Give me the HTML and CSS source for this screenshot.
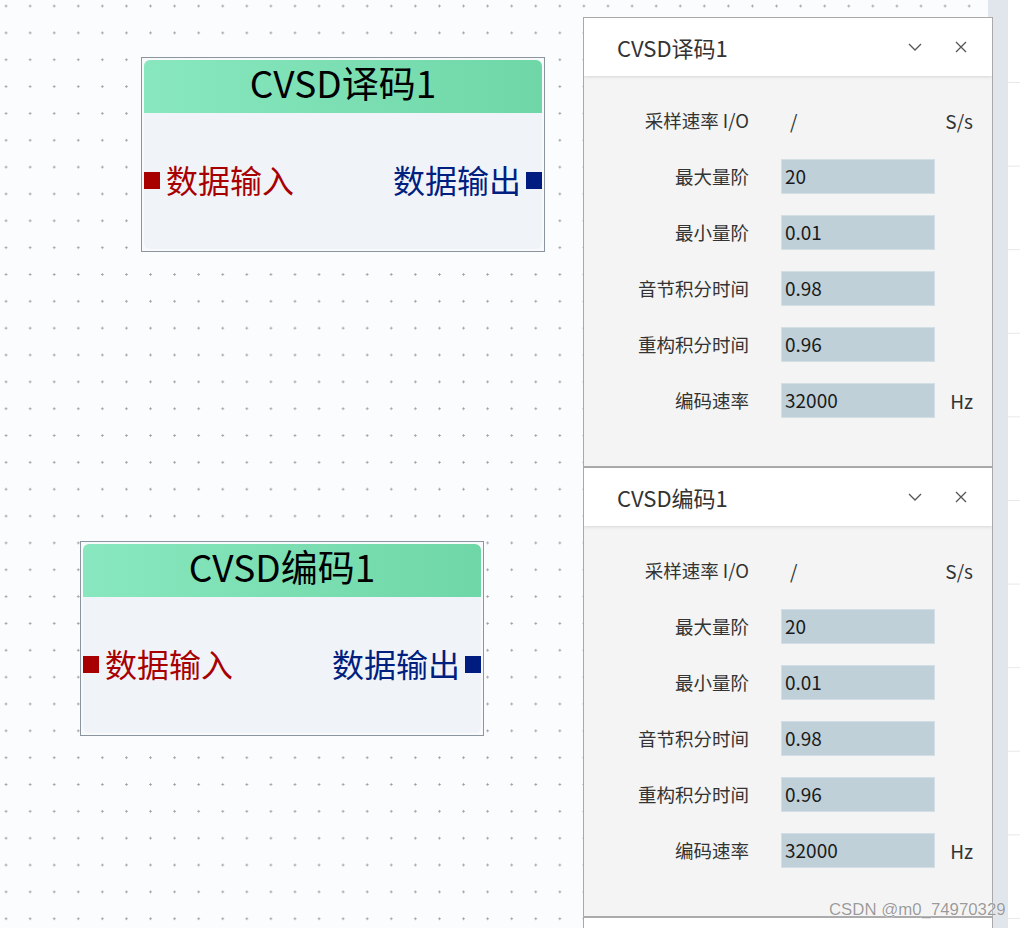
FILE: index.html
```html
<!DOCTYPE html>
<html lang="zh-CN">
<head>
    <meta charset="UTF-8">
    <title>CVSD</title>
    <link rel="stylesheet" href="styles.css">
</head>
<body>
    <div class="canvas">
        <div class="node node-dec">
            <div class="node-card">
                <div class="node-title">CVSD译码1</div>
                <div class="node-ports">
                    <div class="port port-in"><span class="pin"></span>数据输入</div>
                    <div class="port port-out">数据输出<span class="pin"></span></div>
                </div>
            </div>
        </div>

        <div class="node node-enc">
            <div class="node-card">
                <div class="node-title">CVSD编码1</div>
                <div class="node-ports">
                    <div class="port port-in"><span class="pin"></span>数据输入</div>
                    <div class="port port-out">数据输出<span class="pin"></span></div>
                </div>
            </div>
        </div>

        <div class="panel">
            <div class="section">
                <div class="sec-head">
                    <span class="sec-title">CVSD译码1</span>
                    <span class="sec-tools">
                        <svg width="14" height="8" viewBox="0 0 14 8"><path d="M1 1 L7 7 L13 1" fill="none" stroke="#555" stroke-width="1.3"/></svg>
                        <svg width="12" height="12" viewBox="0 0 12 12"><path d="M1 1 L11 11 M11 1 L1 11" fill="none" stroke="#555" stroke-width="1.3"/></svg>
                    </span>
                </div>
                <div class="sec-body">
                    <div class="row"><label>采样速率 I/O</label><span class="plain">/</span><span class="unit">S/s</span></div>
                    <div class="row"><label>最大量阶</label><span class="field">20</span><span class="unit"></span></div>
                    <div class="row"><label>最小量阶</label><span class="field">0.01</span><span class="unit"></span></div>
                    <div class="row"><label>音节积分时间</label><span class="field">0.98</span><span class="unit"></span></div>
                    <div class="row"><label>重构积分时间</label><span class="field">0.96</span><span class="unit"></span></div>
                    <div class="row"><label>编码速率</label><span class="field">32000</span><span class="unit">Hz</span></div>
                </div>
            </div>
            <div class="section">
                <div class="sec-head">
                    <span class="sec-title">CVSD编码1</span>
                    <span class="sec-tools">
                        <svg width="14" height="8" viewBox="0 0 14 8"><path d="M1 1 L7 7 L13 1" fill="none" stroke="#555" stroke-width="1.3"/></svg>
                        <svg width="12" height="12" viewBox="0 0 12 12"><path d="M1 1 L11 11 M11 1 L1 11" fill="none" stroke="#555" stroke-width="1.3"/></svg>
                    </span>
                </div>
                <div class="sec-body">
                    <div class="row"><label>采样速率 I/O</label><span class="plain">/</span><span class="unit">S/s</span></div>
                    <div class="row"><label>最大量阶</label><span class="field">20</span><span class="unit"></span></div>
                    <div class="row"><label>最小量阶</label><span class="field">0.01</span><span class="unit"></span></div>
                    <div class="row"><label>音节积分时间</label><span class="field">0.98</span><span class="unit"></span></div>
                    <div class="row"><label>重构积分时间</label><span class="field">0.96</span><span class="unit"></span></div>
                    <div class="row"><label>编码速率</label><span class="field">32000</span><span class="unit">Hz</span></div>
                </div>
            </div>
        </div>
    </div>
    <div class="scroll-strip"></div>
    <div class="side-list"></div>

    <div class="watermark">CSDN @m0_74970329</div>
</body>
</html>
```

FILE: styles.css
```css
html, body {
    margin: 0;
    padding: 0;
}

body {
    width: 1020px;
    height: 928px;
    display: flex;
    overflow: hidden;
    font-family: "Noto Sans CJK SC", "Noto Sans", sans-serif;
    background: #fff;
}

.canvas {
    position: relative;
    width: 988px;
    height: 928px;
    flex: none;
    background-color: #fbfcfe;
    background-image: radial-gradient(circle, #9ea3a9 0.9px, transparent 1.4px);
    background-size: 24.08px 26.85px;
    background-position: -6px -7.4px;
}

.scroll-strip {
    width: 20px;
    flex: none;
    background: #e0e6eb;
}

.side-list {
    flex: 1;
    background-color: #fff;
    background-image: linear-gradient(#e6e8ea 1px, transparent 1px);
    background-size: 100% 83.6px;
    background-position: 0 82px;
}

/* canvas nodes */
.node {
    position: absolute;
    width: 404px;
    height: 195px;
    box-sizing: border-box;
    border: 1px solid #8b95a0;
    padding: 2px;
    background: #f7f9fb;
}

.node-dec {
    left: 141px;
    top: 57px;
}

.node-enc {
    left: 80px;
    top: 541px;
}

.node-card {
    height: 100%;
    display: flex;
    flex-direction: column;
    border-radius: 6px;
    background: #f0f4f8;
}

.node-title {
    height: 53px;
    box-sizing: border-box;
    padding-bottom: 9px;
    line-height: 44px;
    text-align: center;
    font-size: 37px;
    color: #000;
    border-radius: 6px 6px 0 0;
    background: linear-gradient(to right, #88e7bf, #6fd7a7);
}

.node-ports {
    flex: 1;
    display: flex;
    align-items: center;
    justify-content: space-between;
    padding-bottom: 4px;
}

.port {
    display: flex;
    align-items: center;
    font-size: 32px;
    line-height: 40px;
}

.port-in {
    color: #a80000;
    gap: 6px;
}

.port-out {
    color: #002080;
    gap: 5px;
}

.pin {
    width: 16px;
    height: 17px;
    display: block;
    margin-top: 3px;
}

.port-in .pin {
    background: #a80000;
}

.port-out .pin {
    background: #001c80;
}

/* property panel */
.panel {
    position: absolute;
    left: 583px;
    top: 17px;
    width: 410px;
    height: 911px;
    box-sizing: border-box;
    border: 1px solid #a9a9a9;
    border-bottom: none;
    background: #fff;
    overflow: hidden;
}

.section {
    border-bottom: 2px solid #ababab;
}

.sec-head {
    position: relative;
    height: 58px;
    display: flex;
    align-items: center;
    justify-content: space-between;
    padding: 0 25px 0 33px;
    background: #fff;
    box-shadow: 0 1px 3px rgba(0, 0, 0, 0.12);
    z-index: 1;
}

.sec-title {
    font-size: 22px;
    color: #333;
}

.sec-tools {
    display: flex;
    align-items: center;
    gap: 33px;
}

.sec-tools svg {
    display: block;
}

.sec-body {
    height: 390px;
    box-sizing: border-box;
    padding-top: 27px;
    background: #f4f4f4;
    display: flex;
    flex-direction: column;
    gap: 21px;
}

.row {
    display: grid;
    grid-template-columns: 197px 154px 1fr;
    height: 35px;
    align-items: center;
    font-size: 18.5px;
    line-height: 33px;
    color: #333;
}

.row label {
    text-align: right;
    padding-right: 32px;
}

.field {
    height: 35px;
    line-height: 31px;
    box-sizing: border-box;
    border: 1px solid #d3dfe5;
    background: #bfd0d9;
    padding-left: 3px;
    font-size: 19px;
    color: #1a1a1a;
}

.plain {
    padding-left: 9px;
    font-size: 19px;
}

.unit {
    text-align: right;
    padding-right: 19px;
    font-size: 19px;
}

.watermark {
    position: absolute;
    left: 829px;
    top: 900px;
    font-family: "Liberation Sans", Arial, sans-serif;
    font-size: 16.8px;
    color: rgba(120, 120, 120, 0.75);
    text-shadow: 0 0 1px #fff, 0 0 1px #fff;
    z-index: 5;
}
```
